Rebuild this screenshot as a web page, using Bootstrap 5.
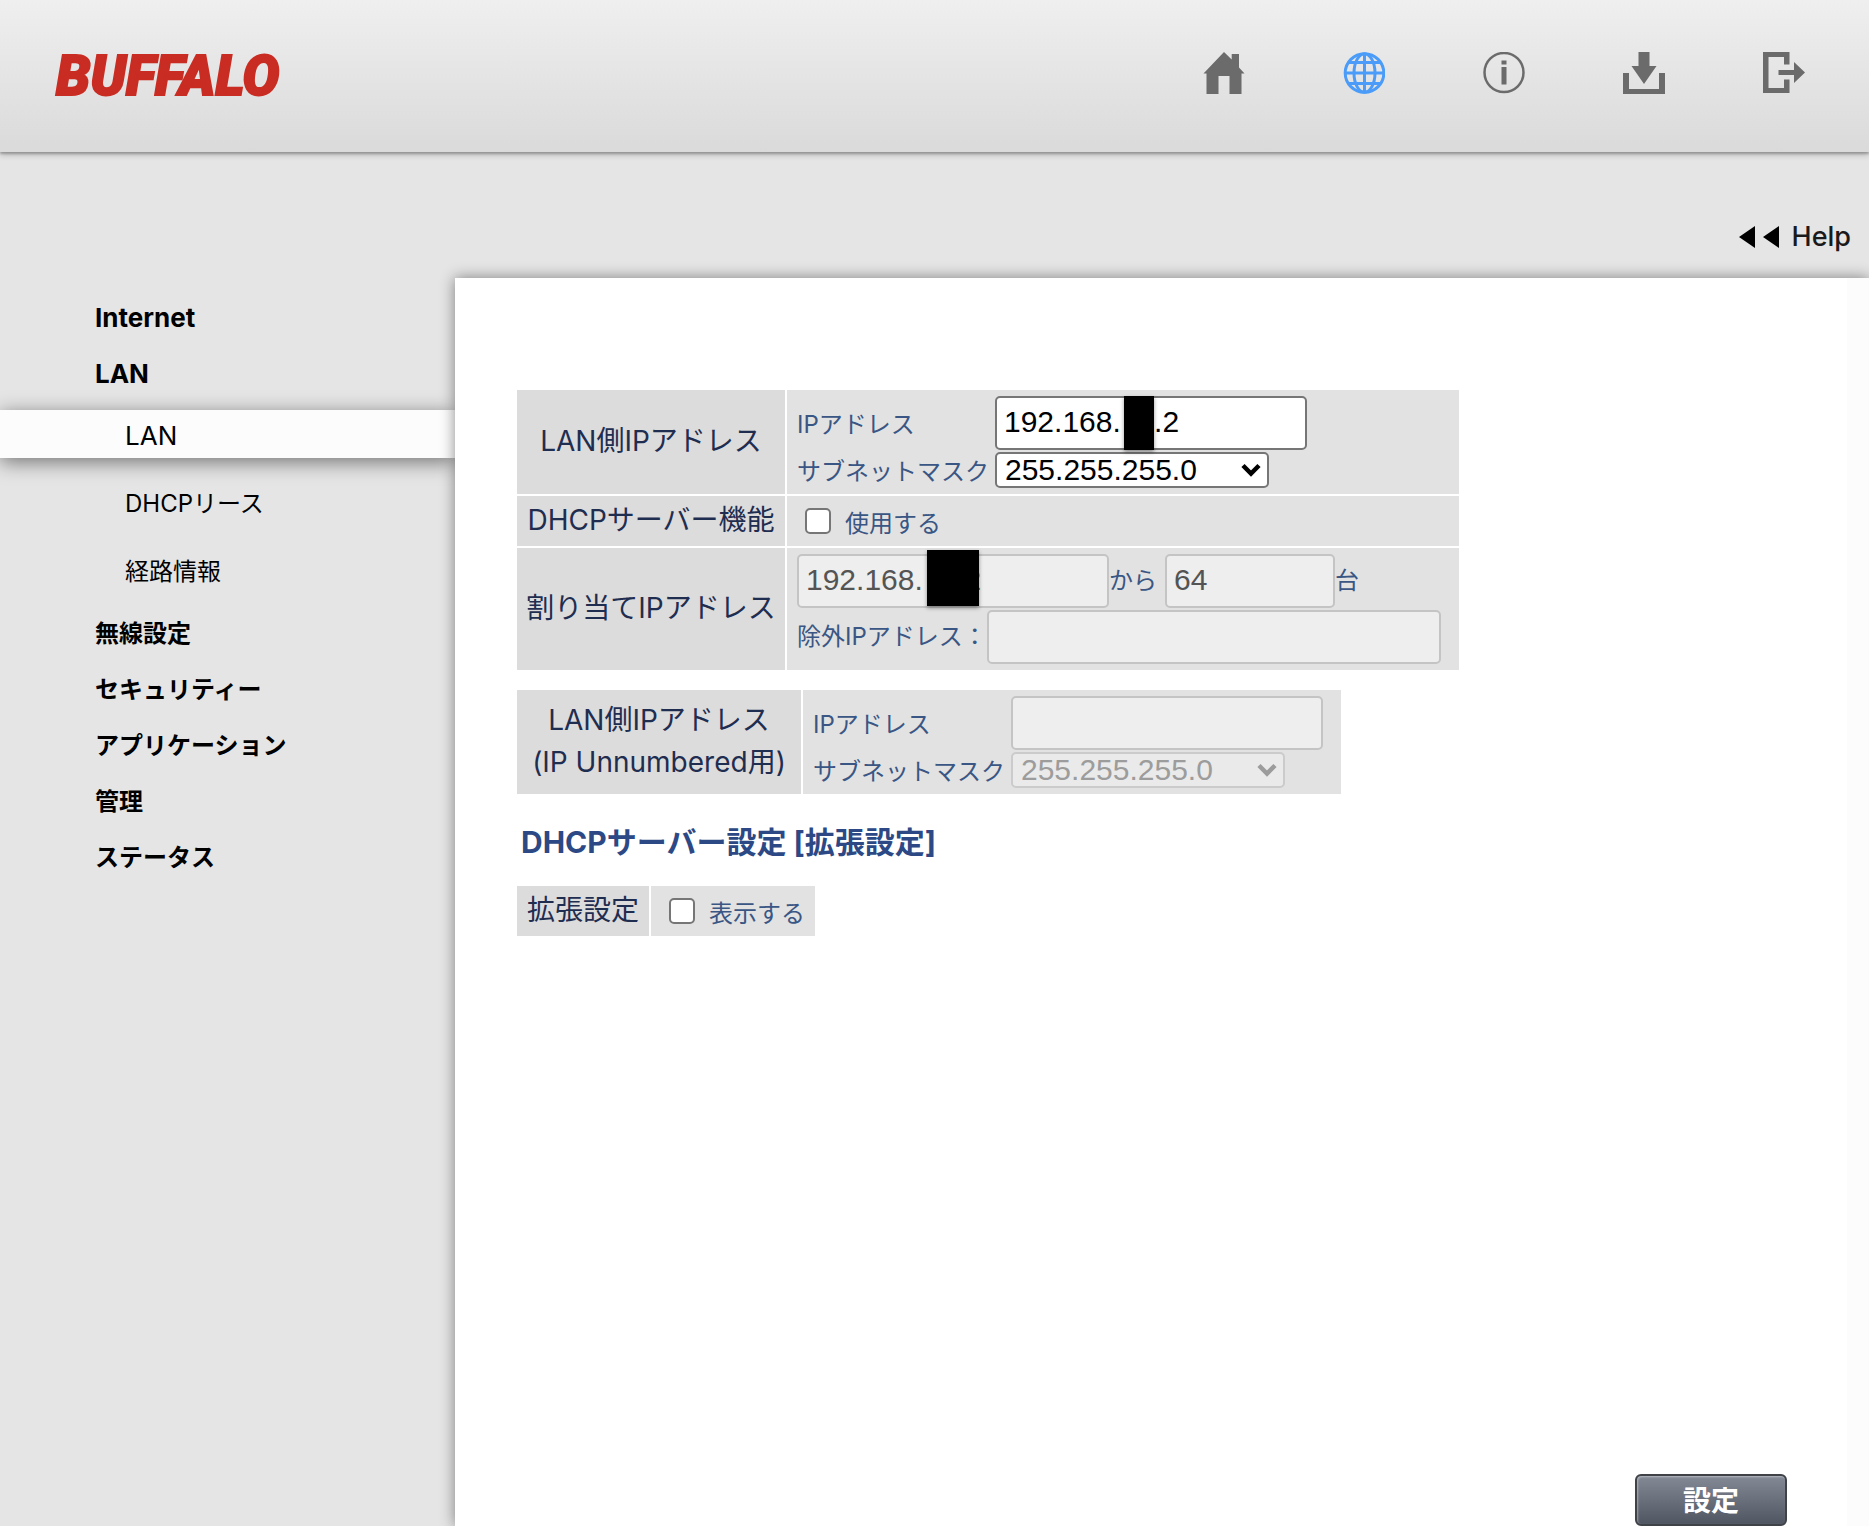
<!DOCTYPE html>
<html lang="ja">
<head>
<meta charset="utf-8">
<meta name="viewport" content="width=device-width, initial-scale=1">
<title>BUFFALO - LAN</title>
<link href="https://cdn.jsdelivr.net/npm/bootstrap@5.3.0/dist/css/bootstrap.min.css" rel="stylesheet">
<style>
body{font-family:Inter,"Noto Sans CJK JP",sans-serif;font-size:24px;line-height:32px;background:#e5e5e5;color:#000}
.topbar{height:152px;padding:0 64px 0 56px;background:linear-gradient(#efefef,#dadada);box-shadow:0 2px 2px rgba(0,0,0,.22),0 3px 6px rgba(0,0,0,.2);margin-bottom:45px}
.brand-logo{font:italic 900 55px/66px Roboto,sans-serif;color:#c92c22;-webkit-text-stroke:2px #c92c22}
.brand-logo:hover{color:#c92c22}
.tools{gap:98px;color:#6b6b6b;padding-bottom:6px}
.tools a{color:inherit;display:block;line-height:0}
.tools a.current{color:#4a9cf8}
.tools svg{width:42px;height:42px}
.help-row{height:81px;padding:24px 18px 0 0}
.help-link{font-size:27px;font-weight:500;color:#1a1a1a}
.side{width:455px;flex:none;padding-top:10px}
.side a{display:flex;align-items:center;color:#000;text-decoration:none;padding-top:3px}
.side .top-item{height:56px;padding-left:95px;font-weight:700}
.side .sub-item{height:48px;margin:10px 0;padding-left:125px}
.side .latin{font-size:26px}
.side .sub-item.here{background:#fcfcfc;box-shadow:0 4px 20px rgba(0,0,0,.5)}
.panel{background:#fff;border-right:22px solid #fcfcfc;box-shadow:0 0 14px rgba(0,0,0,.45);min-height:calc(100vh - 278px);padding:110px 60px 0;z-index:1}
.form-grid{border-collapse:separate;border-spacing:2px;margin-bottom:16px}
.form-grid th{background:#dcdcdc;color:#1f2d50;font-size:28px;line-height:42px;font-weight:400;text-align:center;white-space:nowrap;padding:3px 9px 5px}
.form-grid td{background:#e2e2e2;color:#3a5684;padding:6px 18px 6px 10px;white-space:nowrap}
.form-grid td.tick{padding:6px 10px 6px 18px}
.tick label{margin-left:14px;padding-top:6px}
.th-a{width:268px}.th-b{width:284px}.th-c{width:132px}
.pairs{display:grid;grid-template-columns:192px auto;column-gap:6px;row-gap:2px;align-items:center;justify-content:start}
.pairs label{padding-top:4px}
.pool-gap{margin-top:2px}
.field{height:54px;border:2px solid #767676;border-radius:5px;background:#fff;color:#000;font-family:"Liberation Sans",sans-serif;font-size:30px;padding:0 7px 2px}
.ip-field{width:312px}.num-field{width:170px}.long-field{width:454px}
.field:disabled{border-color:#c4c4c4;background:#eee;color:#545454;opacity:1}
.mask-pick{appearance:none;width:274px;height:36px;line-height:32px;border:2px solid #767676;border-radius:5px;color:#000;font-family:"Liberation Sans",sans-serif;font-size:30px;padding:0 8px;background:#fff url("data:image/svg+xml,%3Csvg xmlns='http://www.w3.org/2000/svg' viewBox='0 0 20 14'%3E%3Cpath d='M2 2.5l8 8 8-8' fill='none' stroke='%23000' stroke-width='4.5'/%3E%3C/svg%3E") no-repeat right 6px center/20px 14px}
.mask-pick:disabled{border-color:#cbcbcb;background-color:#eaeaea;color:#9c9c9c;opacity:1;background-image:url("data:image/svg+xml,%3Csvg xmlns='http://www.w3.org/2000/svg' viewBox='0 0 20 14'%3E%3Cpath d='M2 2.5l8 8 8-8' fill='none' stroke='%239c9c9c' stroke-width='4.5'/%3E%3C/svg%3E")}
.redact{position:absolute;background:#000;box-shadow:0 2px 4px rgba(0,0,0,.4)}
.redact-a{left:129px;top:0;width:30px;height:54px}
.redact-b{left:130px;top:-4px;width:52px;height:56px}
.tick-box{appearance:none;width:26px;height:26px;border:2px solid #767676;border-radius:5px;background:#fff;flex:none}
.tick-box:checked{background:#4a9cf8}
.section-title{font-size:30px;line-height:40px;font-weight:700;color:#2d4985;margin:26px 0 22px 6px}
.apply-btn{width:152px;height:52px;border:2px solid #3f4348;border-radius:6px;background:linear-gradient(#848a95,#4f5561);box-shadow:inset 1px 1px 2px rgba(255,255,255,.4);color:#fff;font-size:28px;font-weight:700;line-height:40px;padding:2px 0 0}
</style>
<script src="https://cdn.jsdelivr.net/npm/bootstrap@5.3.0/dist/js/bootstrap.bundle.min.js"></script>
</head>
<body>
<header class="topbar d-flex align-items-center justify-content-between">
  <a class="brand-logo text-decoration-none" href="#">BUFFALO</a>
  <nav class="tools d-flex align-items-center" aria-label="メイン">
    <a href="#" aria-label="ホーム"><svg viewBox="0 0 42 42" fill="currentColor"><path d="M21 0l7.7 7.5V2H36v13.5l5.5 6h-3V42h-12V24h-11v18h-12V21.500h-3z"/></svg></a>
    <a href="#" class="current" aria-label="詳細設定"><svg viewBox="0 0 42 42" fill="none" stroke="currentColor" stroke-width="3"><circle cx="21.500" cy="21" r="19.3"/><ellipse cx="21.500" cy="21" rx="10.500" ry="19.3"/><path d="M21.500 1v40M2 21h39M5 10.500h33M5 31.500h33"/></svg></a>
    <a href="#" aria-label="情報"><svg viewBox="0 0 42 42" fill="none" stroke="currentColor" stroke-width="2.500"><circle cx="21" cy="20.500" r="19.500"/><path d="M21 8.500v4M21 15v17.500" stroke-width="5"/></svg></a>
    <a href="#" aria-label="ダウンロード"><svg viewBox="0 0 42 42" fill="currentColor"><path d="M15.500 0h11v14h7L21 32 8.500 14h7zM0 21h6v16h30V21h6v21H0z"/></svg></a>
    <a href="#" aria-label="ログアウト"><svg viewBox="0 0 42 42" fill="currentColor"><path d="M0 0h26.500v12.500h-5.500V5H5.500v31H21v-8.500h5.500V41H0zM15.500 18H31v-8L42 20.500 31 31v-8H15.500z"/></svg></a>
  </nav>
</header>
<div class="help-row d-flex justify-content-end align-items-start">
  <a href="#" class="help-link d-flex align-items-center text-decoration-none">
    <svg class="me-2" width="45" height="22" viewBox="0 0 45 22" fill="#000" aria-hidden="true"><path d="M0 11L16 0v22zM24 11L40 0v22z"/></svg>Help</a>
</div>
<div class="d-flex">
  <nav class="side" aria-label="設定">
    <a href="#" class="top-item latin">Internet</a>
    <a href="#" class="top-item latin">LAN</a>
    <div class="d-flex flex-column">
      <a href="#" class="sub-item here latin" aria-current="page">LAN</a>
      <a href="#" class="sub-item">DHCPリース</a>
      <a href="#" class="sub-item">経路情報</a>
    </div>
    <a href="#" class="top-item">無線設定</a>
    <a href="#" class="top-item">セキュリティー</a>
    <a href="#" class="top-item">アプリケーション</a>
    <a href="#" class="top-item">管理</a>
    <a href="#" class="top-item">ステータス</a>
  </nav>
  <main class="panel flex-grow-1 position-relative d-flex flex-column align-items-start">
    <table class="form-grid">
      <tr>
        <th class="th-a" scope="row">LAN側IPアドレス</th>
        <td>
          <div class="pairs">
            <label for="lan-ip">IPアドレス</label>
            <div class="d-flex position-relative"><input class="field ip-field" id="lan-ip" type="text" value="192.168.&nbsp;&nbsp;&nbsp;&nbsp;.2"><span class="redact redact-a"></span></div>
            <label for="lan-mask">サブネットマスク</label>
            <select class="mask-pick" id="lan-mask"><option>255.255.255.0</option></select>
          </div>
        </td>
      </tr>
      <tr>
        <th scope="row">DHCPサーバー機能</th>
        <td class="tick"><div class="d-flex align-items-center"><input class="tick-box" type="checkbox" id="dhcp-on"><label for="dhcp-on">使用する</label></div></td>
      </tr>
      <tr>
        <th scope="row">割り当てIPアドレス</th>
        <td>
          <div class="d-flex align-items-center">
            <div class="d-flex position-relative"><input class="field ip-field" id="pool-ip" type="text" value="192.168.&nbsp;&nbsp;&nbsp;&nbsp;.2" aria-label="割り当て開始IPアドレス" disabled><span class="redact redact-b"></span></div>
            <label class="me-2" for="pool-count">から</label>
            <input class="field num-field" id="pool-count" type="text" value="64" disabled>
            <span>台</span>
          </div>
          <div class="pool-gap d-flex align-items-center justify-content-between">
            <label for="pool-skip">除外IPアドレス：</label>
            <input class="field long-field" id="pool-skip" type="text" disabled>
          </div>
        </td>
      </tr>
    </table>
    <table class="form-grid mb-0">
      <tr>
        <th class="th-b" scope="row">LAN側IPアドレス<br>(IP Unnumbered用)</th>
        <td>
          <div class="pairs">
            <label for="un-ip">IPアドレス</label>
            <input class="field ip-field" id="un-ip" type="text" disabled>
            <label for="un-mask">サブネットマスク</label>
            <select class="mask-pick" id="un-mask" disabled><option>255.255.255.0</option></select>
          </div>
        </td>
      </tr>
    </table>
    <h2 class="section-title">DHCPサーバー設定 [拡張設定]</h2>
    <table class="form-grid">
      <tr>
        <th class="th-c" scope="row">拡張設定</th>
        <td class="tick"><div class="d-flex align-items-center"><input class="tick-box" type="checkbox" id="ext-on"><label for="ext-on">表示する</label></div></td>
      </tr>
    </table>
    <button type="button" class="apply-btn mt-auto align-self-end">設定</button>
  </main>
</div>
</body>
</html>
